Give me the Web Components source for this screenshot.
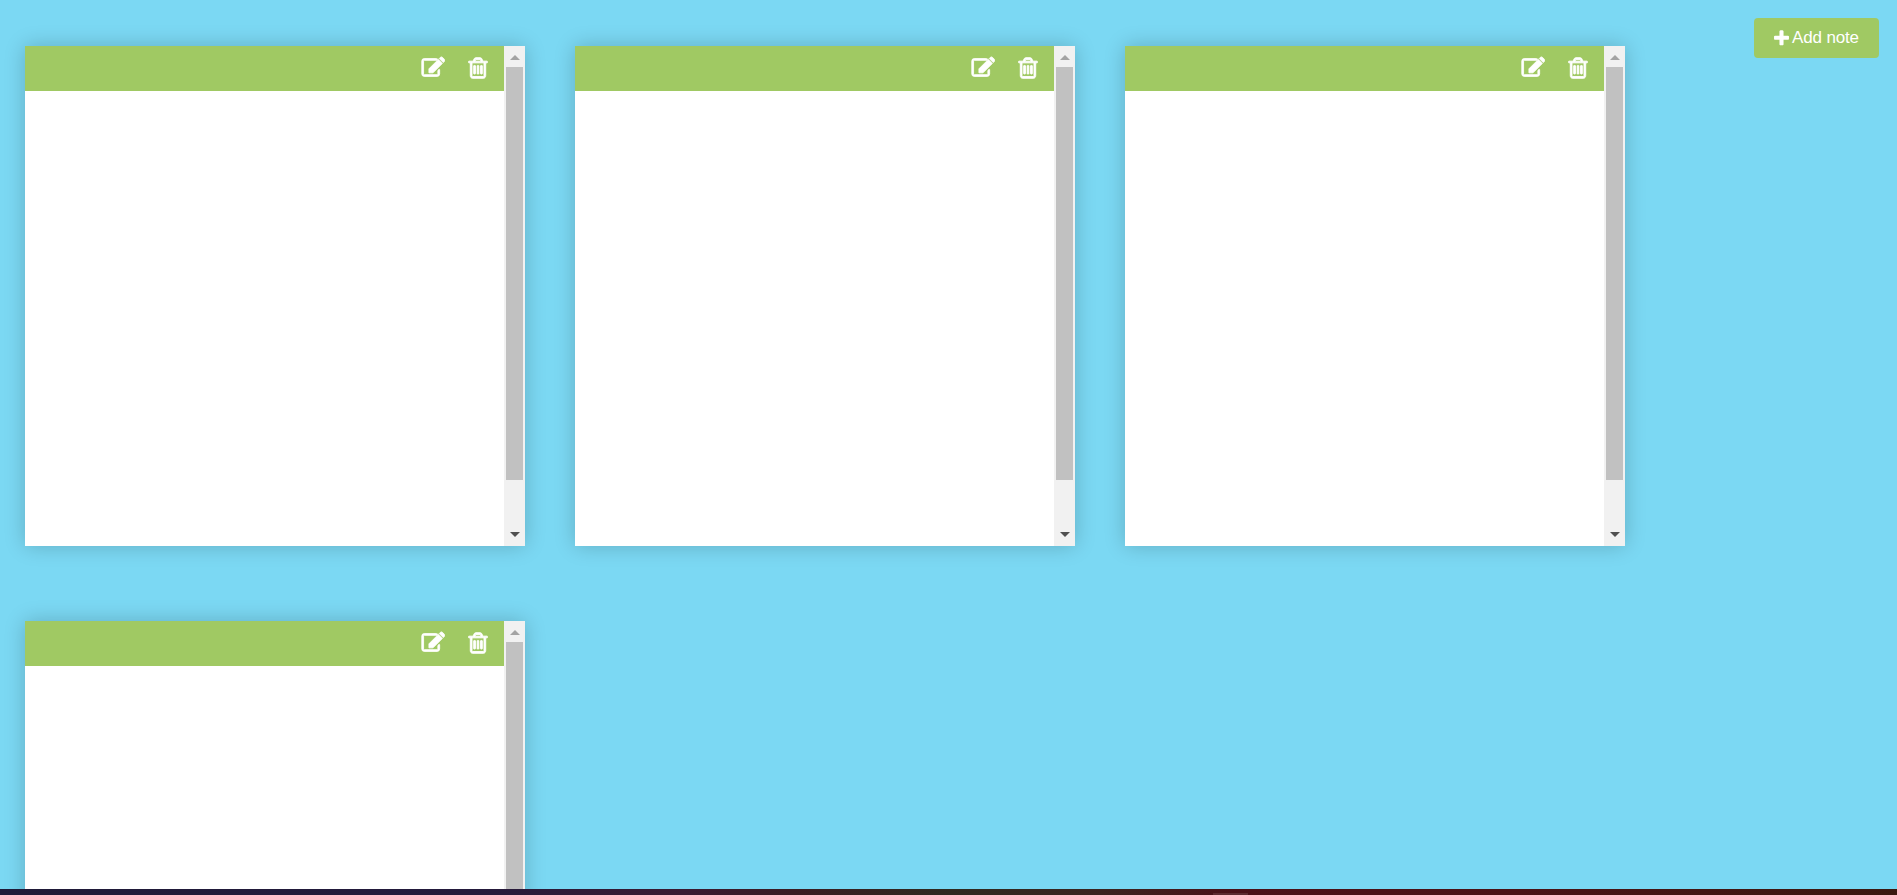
<!DOCTYPE html>
<html>
<head>
<meta charset="utf-8">
<title>Notes</title>
<style>
    html, body {
        margin: 0;
        padding: 0;
        height: 100%;
        overflow: hidden;
    }
    body {
        display: flex;
        flex-direction: column;
        font-family: "Liberation Sans", Arial, sans-serif;
    }
</style>
</head>
<body>
<notes-board>
    <add-button slot="action">Add note</add-button>
    <sticky-note></sticky-note>
    <sticky-note></sticky-note>
    <sticky-note></sticky-note>
    <sticky-note></sticky-note>
</notes-board>
<desktop-strip></desktop-strip>

<script>
const ICON_EDIT = 'M1408 1058V1358q0 178-178 178H306q-178 0-178-178V434q0-178 178-178H1138q63 0 117 25 15 7 18 23 3 17-9 29l-49 49q-14 14-32 8-23-6-45-6H306q-50 0-50 50V1358q0 50 50 50H1230q50 0 50-50V1122q0-13 9-22l64-64q15-15 35-7t20 29zM1312 320l288 288-672 672h-288v-288zM1756 452l-92 92-288-288 92-92q28-28 68-28t68 28l152 152q28 28 28 68t-28 68z';
const ICON_TRASH = 'M704 736v576q0 14-9 23t-23 9h-64q-14 0-23-9t-9-23v-576q0-14 9-23t23-9h64q14 0 23 9t9 23zm256 0v576q0 14-9 23t-23 9h-64q-14 0-23-9t-9-23v-576q0-14 9-23t23-9h64q14 0 23 9t9 23zm256 0v576q0 14-9 23t-23 9h-64q-14 0-23-9t-9-23v-576q0-14 9-23t23-9h64q14 0 23 9t9 23zm128 724v-948h-896v948q0 22 7 40.5t14.5 27 10.5 8.5h832q3 0 10.5-8.5t14.5-27 7-40.5zm-672-1076h448l-48-117q-7-9-17-11h-317q-10 2-17 11zm928 32v64q0 14-9 23t-23 9h-96v948q0 83-47 143.5t-113 60.5h-832q-66 0-113-58.5t-47-141.5v-952h-96q-14 0-23-9t-9-23v-64q0-14 9-23t23-9h309l70-167q15-37 54-63t79-26h320q40 0 79 26t54 63l70 167h309q14 0 23 9t9 23z';
const ICON_PLUS = 'M1600 736v192q0 40-28 68t-68 28h-416v416q0 40-28 68t-68 28h-192q-40 0-68-28t-28-68v-416h-416q-40 0-68-28t-28-68v-192q0-40 28-68t68-28h416v-416q0-40 28-68t68-28h192q40 0 68 28t28 68v416h416q40 0 68 28t28 68z';

function icon(path, size, weight) {
    return `<svg width="${size}" height="${size}" viewBox="0 0 1792 1792" fill="#fff" stroke="#fff" stroke-width="${weight}"><path d="${path}"/></svg>`;
}

class NotesBoard extends HTMLElement {
    constructor() {
        super();
        this.attachShadow({ mode: 'open' });
        this.shadowRoot.innerHTML = `
            <style>
                :host {
                    display: block;
                    position: relative;
                    flex: 1;
                    min-height: 0;
                    overflow: hidden;
                    background: #7bd8f3;
                }
                .notes {
                    display: flex;
                    flex-wrap: wrap;
                    align-items: flex-start;
                    column-gap: 50px;
                    row-gap: 75px;
                    padding: 46px 25px;
                }
                .action {
                    position: absolute;
                    top: 18px;
                    right: 18px;
                }
            </style>
            <div class="action"><slot name="action"></slot></div>
            <div class="notes"><slot></slot></div>
        `;
    }
}

class AddButton extends HTMLElement {
    constructor() {
        super();
        this.attachShadow({ mode: 'open' });
        this.shadowRoot.innerHTML = `
            <style>
                :host {
                    box-sizing: border-box;
                    display: inline-flex;
                    align-items: center;
                    justify-content: center;
                    gap: 1px;
                    width: 125px;
                    height: 40px;
                    padding-right: 2px;
                    background: #a0c963;
                    color: #fff;
                    border-radius: 4px;
                    font: 17px "Liberation Sans", Arial, sans-serif;
                    letter-spacing: -0.15px;
                    cursor: pointer;
                }
                svg { display: block; }
            </style>
            ${icon(ICON_PLUS, 19, 0)}<slot></slot>
        `;
    }
}

class NoteScrollbar extends HTMLElement {
    constructor() {
        super();
        this.attachShadow({ mode: 'open' });
        this.shadowRoot.innerHTML = `
            <style>
                :host {
                    display: flex;
                    flex-direction: column;
                    align-items: center;
                    width: 21px;
                    flex: none;
                    background: #f1f1f1;
                }
                .btn {
                    box-sizing: border-box;
                    flex: none;
                    height: 21px;
                    width: 100%;
                    display: flex;
                    align-items: center;
                    justify-content: center;
                }
                .btn.top { padding-top: 2px; }
                .btn.bottom { padding-bottom: 3px; }
                .up {
                    border-left: 5px solid transparent;
                    border-right: 5px solid transparent;
                    border-bottom: 5px solid #a3a3a3;
                }
                .down {
                    border-left: 5px solid transparent;
                    border-right: 5px solid transparent;
                    border-top: 5px solid #505050;
                }
                .thumb {
                    flex: none;
                    width: 17px;
                    height: 413px;
                    background: #c1c1c1;
                }
                .rest { flex: 1; }
            </style>
            <div class="btn top"><div class="up"></div></div>
            <div class="thumb"></div>
            <div class="rest"></div>
            <div class="btn bottom"><div class="down"></div></div>
        `;
    }
}

class StickyNote extends HTMLElement {
    constructor() {
        super();
        this.attachShadow({ mode: 'open' });
        this.shadowRoot.innerHTML = `
            <style>
                :host {
                    display: flex;
                    width: 500px;
                    height: 500px;
                    flex: none;
                    background: #fff;
                    box-shadow: 0 0 20px rgba(0, 0, 0, 0.2);
                }
                .main {
                    flex: 1;
                    display: flex;
                    flex-direction: column;
                }
                .tools {
                    box-sizing: border-box;
                    height: 45px;
                    background: #a0c963;
                    display: flex;
                    align-items: center;
                    justify-content: flex-end;
                    gap: 21px;
                    padding: 0 14px 2px 0;
                }
                svg { display: block; cursor: pointer; }
                .body { flex: 1; }
            </style>
            <div class="main">
                <div class="tools">
                    ${icon(ICON_EDIT, 25, 60)}
                    ${icon(ICON_TRASH, 24, 70)}
                </div>
                <div class="body"></div>
            </div>
            <note-scrollbar></note-scrollbar>
        `;
    }
}

class DesktopStrip extends HTMLElement {
    constructor() {
        super();
        this.attachShadow({ mode: 'open' });
        this.shadowRoot.innerHTML = `
            <style>
                :host {
                    display: block;
                    position: relative;
                    flex: none;
                    height: 6px;
                    background: linear-gradient(90deg, #1f1a38 0%, #241a3c 25%, #3a1a32 36%, #3a1c22 42%, #2e2a20 50%, #3a2420 58%, #4a1018 65%, #4a1216 80%, #3a1810 100%);
                }
                :host::after {
                    content: "";
                    position: absolute;
                    left: 1213px;
                    bottom: 0;
                    width: 35px;
                    height: 2px;
                    background: #5c2a30;
                }
            </style>
        `;
    }
}

customElements.define('notes-board', NotesBoard);
customElements.define('add-button', AddButton);
customElements.define('note-scrollbar', NoteScrollbar);
customElements.define('sticky-note', StickyNote);
customElements.define('desktop-strip', DesktopStrip);
</script>
</body>
</html>
